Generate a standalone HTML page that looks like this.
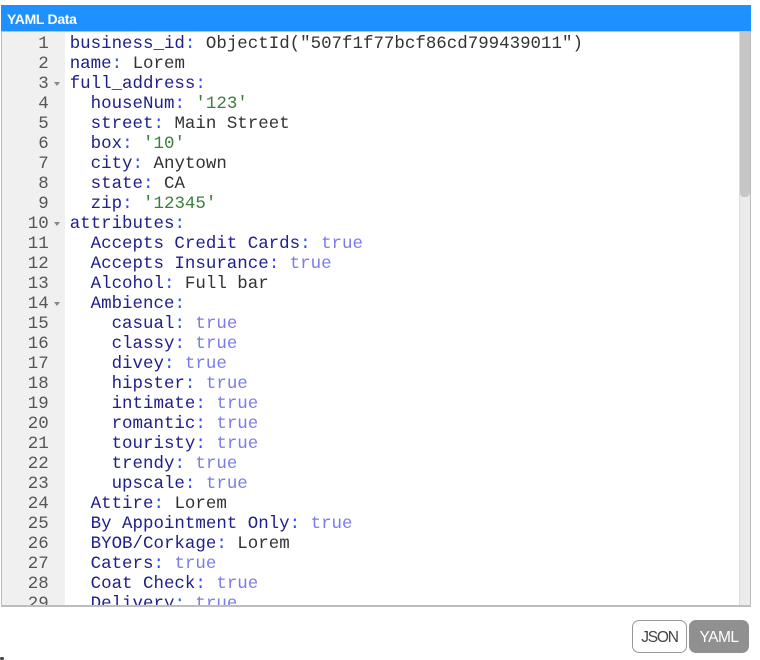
<!DOCTYPE html>
<html>
<head>
<meta charset="utf-8">
<style>
html,body{margin:0;padding:0;width:760px;height:660px;background:#fff;overflow:hidden}
body{position:relative;font-family:"Liberation Sans",sans-serif}
.hdr{position:absolute;left:1px;top:5px;width:750px;height:27px;background:#1e90ff;color:#fff;font-weight:bold;font-size:14px;line-height:28px;box-sizing:border-box;padding-left:6px;letter-spacing:-.3px;border-bottom:1px solid #b5c4d2}
.ed{position:absolute;left:1px;top:32px;width:750px;height:575px;box-sizing:border-box;border:1px solid #bdbdbd;border-top:0;border-bottom:2px solid #bdbdbd;overflow:hidden;background:#fff}
.gut{position:absolute;left:0;top:0;width:63px;height:100%;background:#f0f0f0}
.w{position:absolute;left:.7px;top:1px;width:700px;height:600px}
.sb{position:absolute;right:0;top:0;width:10px;height:100%;background:#ebebeb;border-left:1px solid #ddd}
.th{position:absolute;left:0;top:0;width:10px;height:165px;background:#c6c6c6;border-radius:0 0 4px 4px}
.n,.c{position:absolute;font:17.47px/20px "Liberation Mono",monospace;white-space:pre;height:20px}
.n{left:0;width:46px;text-align:right;color:#555}
.c{left:67px;color:#20208c}
.c i{font-style:normal}
.p{color:#2a50f5}
.v{color:#333}
.t{color:#7c7ce8}
.s{color:#3a7f3a}
.a{position:absolute;left:51.5px;width:0;height:0;border-left:3.5px solid transparent;border-right:3.5px solid transparent;border-top:4px solid #888}
.btn{position:absolute;top:620px;height:33px;box-sizing:border-box;border-radius:7px;font-size:15.5px;line-height:35px;text-align:center;letter-spacing:-.7px}
.j{left:632px;width:55px;border:1px solid #999;background:#fff;color:#444;line-height:33px;letter-spacing:-1.2px}
.y{left:689px;width:60px;background:#909090;color:#fff;letter-spacing:-.5px}
.dot{position:absolute;left:0;top:657px;width:4px;height:3px;background:#444;border-radius:2px}
</style>
</head>
<body>
<div class="hdr">YAML Data</div>
<div class="ed">
<div class="gut"></div>
<div class="w">
<div class="n" style="top:1px">1</div><div class="c" style="top:1px">business_id<i class="p">:</i> <i class="v">ObjectId("507f1f77bcf86cd799439011")</i></div>
<div class="n" style="top:21px">2</div><div class="c" style="top:21px">name<i class="p">:</i> <i class="v">Lorem</i></div>
<div class="n" style="top:41px">3</div><div class="a" style="top:49px"></div><div class="c" style="top:41px">full_address<i class="p">:</i></div>
<div class="n" style="top:61px">4</div><div class="c" style="top:61px">  houseNum<i class="p">:</i> <i class="s">'123'</i></div>
<div class="n" style="top:81px">5</div><div class="c" style="top:81px">  street<i class="p">:</i> <i class="v">Main Street</i></div>
<div class="n" style="top:101px">6</div><div class="c" style="top:101px">  box<i class="p">:</i> <i class="s">'10'</i></div>
<div class="n" style="top:121px">7</div><div class="c" style="top:121px">  city<i class="p">:</i> <i class="v">Anytown</i></div>
<div class="n" style="top:141px">8</div><div class="c" style="top:141px">  state<i class="p">:</i> <i class="v">CA</i></div>
<div class="n" style="top:161px">9</div><div class="c" style="top:161px">  zip<i class="p">:</i> <i class="s">'12345'</i></div>
<div class="n" style="top:181px">10</div><div class="a" style="top:189px"></div><div class="c" style="top:181px">attributes<i class="p">:</i></div>
<div class="n" style="top:201px">11</div><div class="c" style="top:201px">  Accepts Credit Cards<i class="p">:</i> <i class="t">true</i></div>
<div class="n" style="top:221px">12</div><div class="c" style="top:221px">  Accepts Insurance<i class="p">:</i> <i class="t">true</i></div>
<div class="n" style="top:241px">13</div><div class="c" style="top:241px">  Alcohol<i class="p">:</i> <i class="v">Full bar</i></div>
<div class="n" style="top:261px">14</div><div class="a" style="top:269px"></div><div class="c" style="top:261px">  Ambience<i class="p">:</i></div>
<div class="n" style="top:281px">15</div><div class="c" style="top:281px">    casual<i class="p">:</i> <i class="t">true</i></div>
<div class="n" style="top:301px">16</div><div class="c" style="top:301px">    classy<i class="p">:</i> <i class="t">true</i></div>
<div class="n" style="top:321px">17</div><div class="c" style="top:321px">    divey<i class="p">:</i> <i class="t">true</i></div>
<div class="n" style="top:341px">18</div><div class="c" style="top:341px">    hipster<i class="p">:</i> <i class="t">true</i></div>
<div class="n" style="top:361px">19</div><div class="c" style="top:361px">    intimate<i class="p">:</i> <i class="t">true</i></div>
<div class="n" style="top:381px">20</div><div class="c" style="top:381px">    romantic<i class="p">:</i> <i class="t">true</i></div>
<div class="n" style="top:401px">21</div><div class="c" style="top:401px">    touristy<i class="p">:</i> <i class="t">true</i></div>
<div class="n" style="top:421px">22</div><div class="c" style="top:421px">    trendy<i class="p">:</i> <i class="t">true</i></div>
<div class="n" style="top:441px">23</div><div class="c" style="top:441px">    upscale<i class="p">:</i> <i class="t">true</i></div>
<div class="n" style="top:461px">24</div><div class="c" style="top:461px">  Attire<i class="p">:</i> <i class="v">Lorem</i></div>
<div class="n" style="top:481px">25</div><div class="c" style="top:481px">  By Appointment Only<i class="p">:</i> <i class="t">true</i></div>
<div class="n" style="top:501px">26</div><div class="c" style="top:501px">  BYOB/Corkage<i class="p">:</i> <i class="v">Lorem</i></div>
<div class="n" style="top:521px">27</div><div class="c" style="top:521px">  Caters<i class="p">:</i> <i class="t">true</i></div>
<div class="n" style="top:541px">28</div><div class="c" style="top:541px">  Coat Check<i class="p">:</i> <i class="t">true</i></div>
<div class="n" style="top:561px">29</div><div class="c" style="top:561px">  Delivery<i class="p">:</i> <i class="t">true</i></div>
</div>
<div class="sb"><div class="th"></div></div>
</div>
<div class="btn j">JSON</div>
<div class="btn y">YAML</div>
<div class="dot"></div>
</body>
</html>
